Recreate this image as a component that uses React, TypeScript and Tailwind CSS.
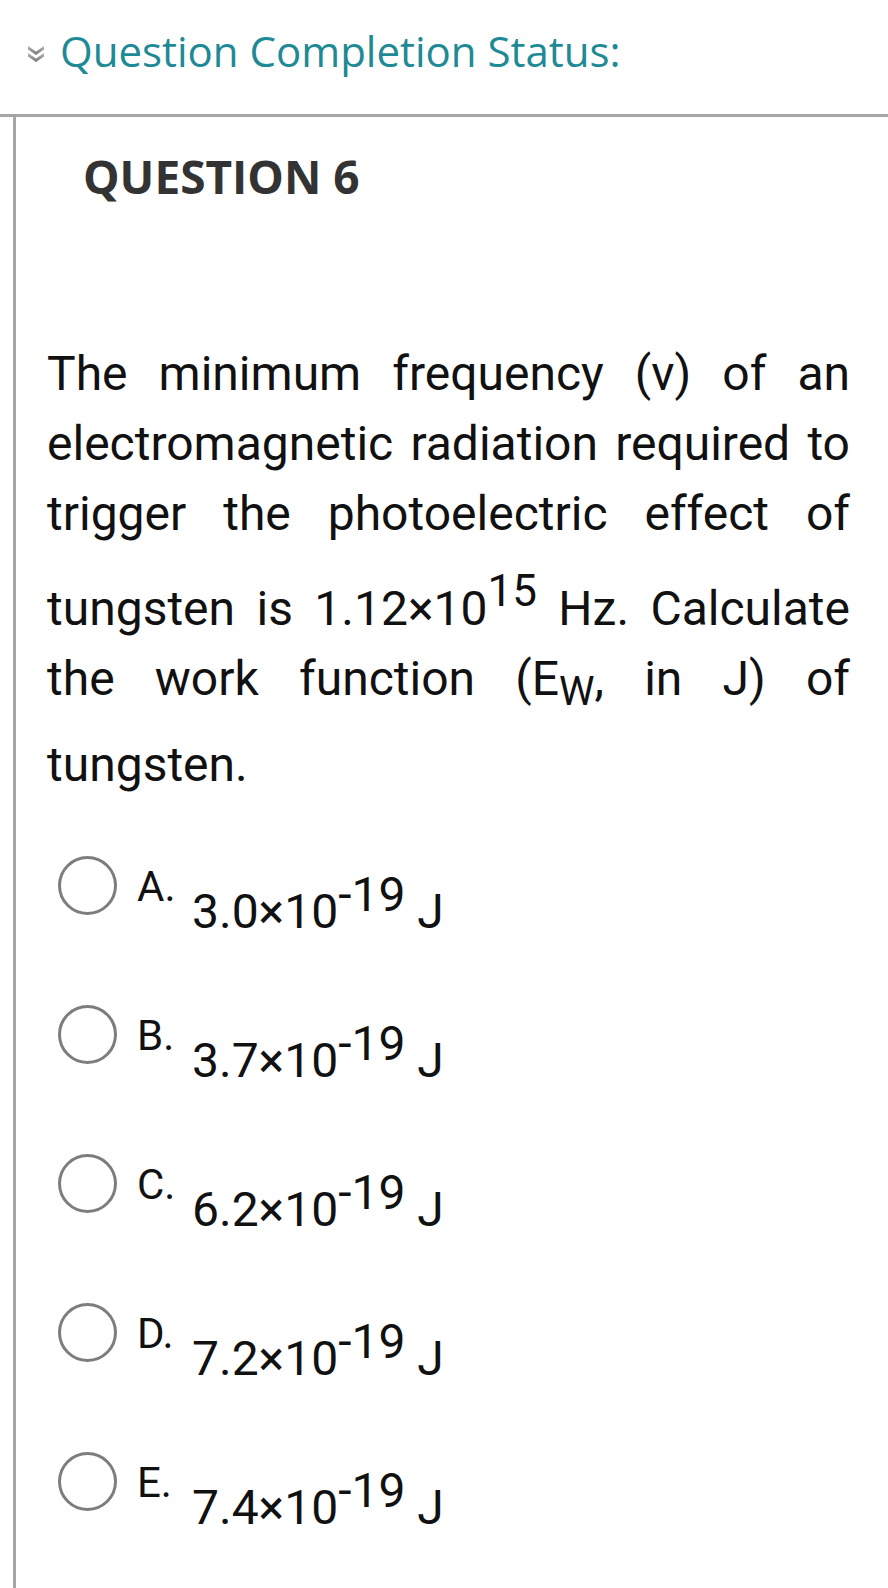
import React from "react"

const options = [
  { label: "A.", value: "3.0" },
  { label: "B.", value: "3.7" },
  { label: "C.", value: "6.2" },
  { label: "D.", value: "7.2" },
  { label: "E.", value: "7.4" },
]

function DoubleChevron() {
  return (
    <svg width="24" height="18" viewBox="0 0 24 18" className="shrink-0">
      <defs>
        <linearGradient id="chev" x1="0" y1="0" x2="0" y2="1">
          <stop offset="0" stopColor="#b4b4b4" />
          <stop offset="1" stopColor="#767676" />
        </linearGradient>
      </defs>
      <path d="M4 1 L12 6.5 L20 1 L20 4.5 L12 10 L4 4.5 Z" fill="url(#chev)" />
      <path d="M4 8 L12 13.5 L20 8 L20 11.5 L12 17 L4 11.5 Z" fill="url(#chev)" />
    </svg>
  )
}

function Option({ label, value }: { label: string; value: string }) {
  return (
    <div className="flex items-start h-[149px] pl-[42px]">
      <div className="w-[59px] h-[59px] rounded-full border-[3px] border-[#7d7d7d] shrink-0" />
      <div className="w-[55px] ml-[20px] mt-[10px] text-[42px] leading-[42px] text-[#111]">{label}</div>
      <div className="mt-[32px] text-[48px] leading-[48px] text-[#111] whitespace-nowrap">
        {value}×10<sup className="text-[48px] top-[-17px]">-19</sup> J
      </div>
    </div>
  )
}

export default function App() {
  return (
    <div className="w-[888px] min-h-[1588px] bg-white">
      {/* Collapsible status header */}
      <div
        className="h-[117px] flex items-start pl-[24px] border-b-[3px] border-[#a6a6a6]"
        style={{ fontFamily: '"Open Sans", sans-serif' }}
      >
        <div className="mt-[45px]">
          <DoubleChevron />
        </div>
        <div className="ml-[12px] mt-[30px] text-[42px] leading-[42px] text-[#1d8a96]">
          Question Completion Status:
        </div>
      </div>

      <div className="ml-[13px] border-l-[3px] border-[#a6a6a6] min-h-[1471px]">
        <h2
          className="pl-[67px] pt-[36px] text-[46px] leading-[47px] font-bold text-[#333]"
          style={{ fontFamily: '"Open Sans", sans-serif' }}
        >
          QUESTION 6
        </h2>

        <div style={{ fontFamily: "Roboto, sans-serif" }}>
          <p className="ml-[31px] mt-[139px] w-[803px] text-[48px] leading-[70px] text-justify text-[#111]">
            The minimum frequency (v) of an electromagnetic radiation required to trigger the
            photoelectric effect of tungsten is 1.12×10
            <sup className="static text-[44px] align-[19px] leading-[85px]">15</sup> Hz. Calculate
            the work function (E
            <sub className="static text-[40px] align-[-10px] leading-[76px]">W</sub>, in J) of
            tungsten.
          </p>

          <div className="mt-[56px]">
            {options.map((o) => (
              <Option key={o.label} label={o.label} value={o.value} />
            ))}
          </div>
        </div>
      </div>
    </div>
  )
}
